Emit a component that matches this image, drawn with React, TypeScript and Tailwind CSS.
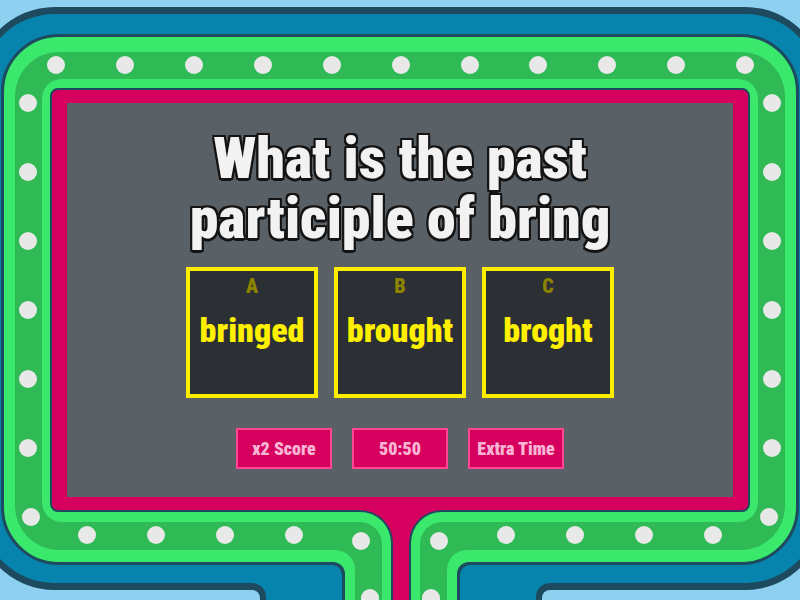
import React from "react";

const answers = [
  { letter: "A", text: "bringed" },
  { letter: "B", text: "brought" },
  { letter: "C", text: "broght" },
];

const powerUps = ["x2 Score", "50:50", "Extra Time"];

// quadrant shapes for the stand under the screen (left side, corner at top-right)
const qL = (x0: number, xc: number, yc: number, r: number) =>
  `M${x0} ${yc} H${xc - r} A${r} ${r} 0 0 1 ${xc} ${yc + r} V610 H${x0} Z`;
// mirrored version (corner at top-left)
const qR = (x0: number, xc: number, yc: number, r: number) =>
  `M${x0} ${yc} H${xc + r} A${r} ${r} 0 0 0 ${xc} ${yc + r} V610 H${x0} Z`;

const layers: { fill: string; xc: number; yc: number; r: number }[] = [
  { fill: "#1d4a5f", xc: 393, yc: 510, r: 33 },
  { fill: "#3ae96b", xc: 391, yc: 512, r: 31 },
  { fill: "#2fba56", xc: 382, yc: 522, r: 22 },
  { fill: "#3ae96b", xc: 355, yc: 550, r: 20 },
  { fill: "#1d4a5f", xc: 345, yc: 562, r: 12 },
  { fill: "#0784ad", xc: 342, yc: 565, r: 10 },
  { fill: "#1d4a5f", xc: 266, yc: 583, r: 14 },
  { fill: "#8dd0ef", xc: 260, yc: 590, r: 8 },
];

const dots: [number, number][] = [
  ...[56, 125, 194, 263, 332, 401, 470, 538, 607, 676, 745].map((x) => [x, 65] as [number, number]),
  ...[103, 172, 241, 310, 379, 448].map((y) => [28, y] as [number, number]),
  ...[103, 172, 241, 310, 379, 448].map((y) => [772, y] as [number, number]),
  [31, 517],
  [769, 517],
  ...[87, 156, 225, 294, 506, 575, 644, 713].map((x) => [x, 535] as [number, number]),
  [361, 541],
  [439, 541],
  [370, 598],
  [431, 598],
];

function FrameLights() {
  return (
    <svg
      className="pointer-events-none absolute left-0 top-0"
      width="800"
      height="600"
      viewBox="0 0 800 600"
    >
      <rect x="358" y="505" width="86" height="105" fill="#d6005f" />
      {layers.map((l, i) => (
        <g key={i} fill={l.fill}>
          <path d={qL(200, l.xc, l.yc, l.r)} />
          <path d={qR(602, 802 - l.xc, l.yc, l.r)} />
        </g>
      ))}
      {dots.map(([x, y], i) => (
        <circle key={i} cx={x} cy={y} r="9" fill="#e8e8e8" />
      ))}
    </svg>
  );
}

export default function App() {
  return (
    <div className="relative h-[600px] w-[800px] overflow-hidden bg-[#8dd0ef] pt-[7px] font-['Roboto_Condensed','DejaVu_Sans_Condensed',sans-serif]">
      <div className="mx-[-25px] h-[583px] rounded-[80px] border-x-[6px] border-y-[7px] border-[#1d4a5f] bg-[#0784ad] px-[20px] pb-[18px] pt-[20px]">
        <div className="h-full rounded-[58px] border-[3px] border-[#1d4a5f] bg-[#3ae96b] px-[11px] pb-[12px] pt-[15px]">
          <div className="h-full rounded-[44px] bg-[#2fba56] px-[27px] pb-[28px] pt-[27px]">
            <div className="h-full rounded-[20px] bg-[#3ae96b] px-[8px] pb-[10px] pt-[9px]">
              <div className="h-full rounded-[8px] border-[2px] border-[#1d4a5f] bg-[#d6005f] px-[15px] py-[13px]">
                <div className="flex h-full flex-col items-center bg-[#596066] pt-[25px]">
                  <h1 className="text-center text-[58px] font-black leading-[60px] text-[#f2f2f2] [text-shadow:-2px_-2px_0_#141414,2px_-2px_0_#141414,-2px_2px_0_#141414,2px_2px_0_#141414,0_-2px_0_#141414,0_2px_0_#141414,-2px_0_0_#141414,2px_0_0_#141414,0_3px_0_#141414]">
                    What is the past
                    <br />
                    participle of bring
                  </h1>

                  <div className="mt-[19px] flex gap-[16px]">
                    {answers.map((a) => (
                      <div
                        key={a.letter}
                        className="flex h-[131px] w-[132px] flex-col items-center border-[4px] border-[#ffee00] bg-[#2c3035]"
                      >
                        <span className="mt-[5px] text-[20px] font-black leading-[20px] text-[#8c8400]">
                          {a.letter}
                        </span>
                        <span className="mt-[18px] text-[34px] font-black leading-[33px] text-[#fff000]">
                          {a.text}
                        </span>
                      </div>
                    ))}
                  </div>

                  <div className="mt-[30px] flex gap-[20px]">
                    {powerUps.map((p) => (
                      <button
                        key={p}
                        className="flex h-[41px] w-[96px] items-center justify-center whitespace-nowrap border-[2px] border-[#ff4690] bg-[#d6005f] text-[18px] font-black text-[#f8b5d4]"
                      >
                        {p}
                      </button>
                    ))}
                  </div>
                </div>
              </div>
            </div>
          </div>
        </div>
      </div>

      <FrameLights />
    </div>
  );
}
